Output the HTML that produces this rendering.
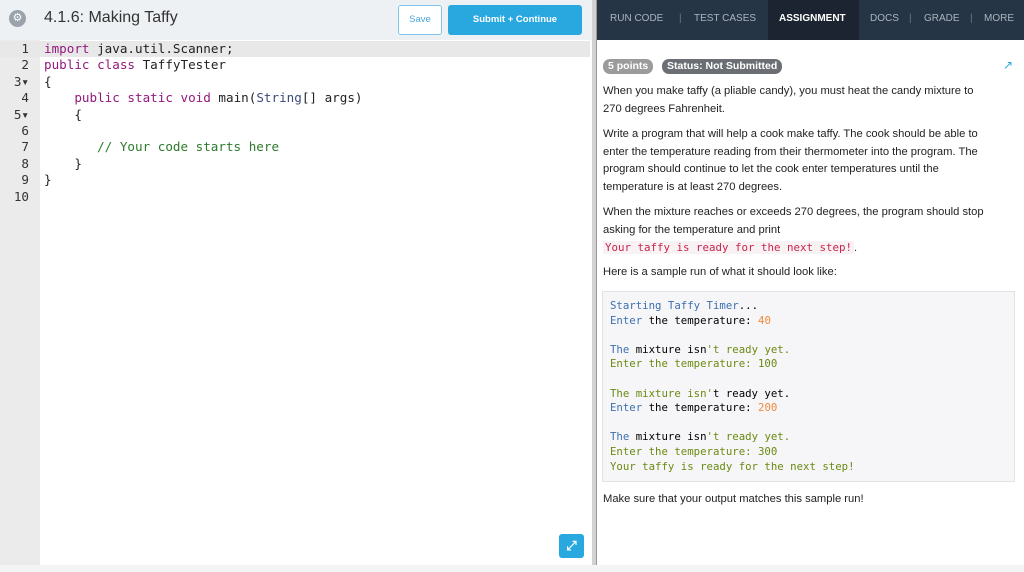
<!DOCTYPE html><html><head><style>
*{margin:0;padding:0;box-sizing:border-box}
body{width:1024px;height:572px;overflow:hidden;background:#fff;font-family:"Liberation Sans",sans-serif;position:relative}
.hdr{position:absolute;left:0;top:0;width:592px;height:40px;background:#eef1f4}
.gut{position:absolute;left:0;top:40px;width:40px;height:525px;background:#ebebeb}
.code{position:absolute;left:0;top:41px;width:590px;font-family:"DejaVu Sans Mono","Liberation Mono",monospace;font-size:12.6px}
.ln{height:16.4px;line-height:16.4px;position:relative;white-space:pre;color:#222}
.ln .n{position:absolute;left:0;width:29px;text-align:right;color:#333}
.ln .t{position:absolute;left:44px}
.k{color:#93197d}.s{color:#3b4a7a}.c{color:#2d7a2d}
.div{position:absolute;left:592px;top:0;width:5px;height:565px;background:#d2d2d2;border-right:1px solid #999}
.bot{position:absolute;left:0;top:565px;width:1024px;height:7px;background:#f3f4f6}
.nav{position:absolute;left:597px;top:0;width:427px;height:40px;background:#263545;font-size:10px;color:#aab4bf}
.nav span{position:absolute;top:13px}
.r{position:absolute;left:603px;font-size:11.2px;color:#222;line-height:17.5px;white-space:nowrap}
pre{font-family:"DejaVu Sans Mono","Liberation Mono",monospace;font-size:10.7px;line-height:14.6px}
.pill{position:absolute;top:59px;height:15px;padding:0 5px;border-radius:7px;color:#fff;font-size:10.5px;font-weight:bold;line-height:15px}
</style></head><body>
<div class="hdr">
<div style="position:absolute;left:9px;top:10px;width:17px;height:17px;border-radius:50%;background:#9aa3ab;color:#fff;font-size:11px;text-align:center;line-height:17px">⚙</div>
<div style="position:absolute;left:44px;top:9px;font-size:16px;color:#333">4.1.6: Making Taffy</div>
<div style="position:absolute;left:398px;top:5px;width:44px;height:30px;border:1px solid #7fc6e8;border-radius:3px;background:#fff;color:#4aa8d8;font-size:9.5px;text-align:center;line-height:28px">Save</div>
<div style="position:absolute;left:448px;top:5px;width:134px;height:30px;background:#29a8e0;border-radius:3px;color:#fff;font-size:9.5px;font-weight:bold;text-align:center;line-height:30px">Submit + Continue</div>
</div>
<div class="gut"></div>
<div style="position:absolute;left:0;top:41px;width:590px;height:16px;background:#e8e8e8"></div>
<div class="code">
<div class="ln"><span class="n">1</span><span class="t"><span class="k">import</span> java.util.Scanner;</span></div>
<div class="ln"><span class="n">2</span><span class="t"><span class="k">public class</span> TaffyTester</span></div>
<div class="ln"><span class="n">3▾</span><span class="t">{</span></div>
<div class="ln"><span class="n">4</span><span class="t">    <span class="k">public static void</span> main(<span class="s">String</span>[] args)</span></div>
<div class="ln"><span class="n">5▾</span><span class="t">    {</span></div>
<div class="ln"><span class="n">6</span><span class="t"></span></div>
<div class="ln"><span class="n">7</span><span class="t">       <span class="c">// Your code starts here</span></span></div>
<div class="ln"><span class="n">8</span><span class="t">    }</span></div>
<div class="ln"><span class="n">9</span><span class="t">}</span></div>
<div class="ln"><span class="n">10</span><span class="t"></span></div>
</div>
<div style="position:absolute;left:559px;top:534px;width:25px;height:24px;background:#29a8e0;border-radius:3px;color:#fff;font-size:13px;text-align:center;line-height:24px;font-weight:bold">⤢</div>
<div class="div"></div>
<div class="bot"></div>
<div class="nav">
<span style="left:13px">RUN CODE</span><span style="left:82px;color:#6b7886">|</span>
<span style="left:97px">TEST CASES</span>
<div style="position:absolute;left:171px;top:0;width:91px;height:40px;background:#1b2430"></div>
<span style="left:182px;color:#fff;font-weight:bold">ASSIGNMENT</span>
<div style="position:absolute;left:210px;top:35px;width:0;height:0;border:5px solid transparent;border-bottom-color:#fff"></div>
<span style="left:273px">DOCS</span><span style="left:312px;color:#6b7886">|</span>
<span style="left:327px">GRADE</span><span style="left:373px;color:#6b7886">|</span>
<span style="left:387px">MORE</span>
</div>
<div class="pill" style="left:603px;background:#9b9b9b">5 points</div>
<div class="pill" style="left:662px;background:#6b6f73">Status: Not Submitted</div>
<div style="position:absolute;left:1003px;top:58px;color:#29a8e0;font-size:12px">↗</div>
<div class="r" style="top:83px">When you make taffy (a pliable candy), you must heat the candy mixture to<br>270 degrees Fahrenheit.</div>
<div class="r" style="top:126px">Write a program that will help a cook make taffy. The cook should be able to<br>enter the temperature reading from their thermometer into the program. The<br>program should continue to let the cook enter temperatures until the<br>temperature is at least 270 degrees.</div>
<div class="r" style="top:204px">When the mixture reaches or exceeds 270 degrees, the program should stop<br>asking for the temperature and print<br><span style="font-family:'DejaVu Sans Mono',monospace;font-size:10.8px;color:#c7254e;background:#f9f2f4;padding:0 2px">Your taffy is ready for the next step!</span>.</div>
<div class="r" style="top:264px">Here is a sample run of what it should look like:</div>
<div style="position:absolute;left:602px;top:291px;width:413px;height:191px;background:#f6f6f8;border:1px solid #e2e2e2;padding:7px 7px">
<pre><span style="color:#3d6fb0">Starting Taffy Timer</span>...
<span style="color:#3d6fb0">Enter</span> the temperature: <span style="color:#f08a3c">40</span>

<span style="color:#3d6fb0">The</span> mixture isn<span style="color:#6a8a10">'t ready yet.</span>
<span style="color:#6a8a10">Enter the temperature: 100</span>

<span style="color:#6a8a10">The mixture isn'</span>t ready yet.
<span style="color:#3d6fb0">Enter</span> the temperature: <span style="color:#f08a3c">200</span>

<span style="color:#3d6fb0">The</span> mixture isn<span style="color:#6a8a10">'t ready yet.</span>
<span style="color:#6a8a10">Enter the temperature: 300
Your taffy is ready for the next step!</span></pre>
</div>
<div class="r" style="top:491px">Make sure that your output matches this sample run!</div>
</body></html>
